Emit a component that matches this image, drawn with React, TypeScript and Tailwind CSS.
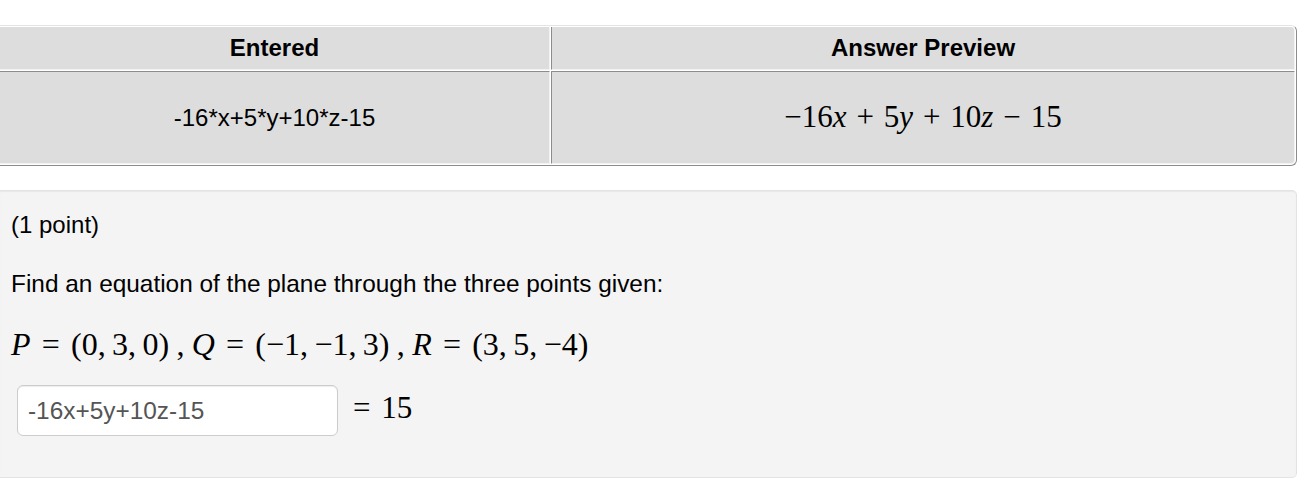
import React from 'react'

const sans = { fontFamily: '"Liberation Sans", Arial, sans-serif' }
const serif = { fontFamily: '"Liberation Serif", "Times New Roman", serif' }

function V({ children }: { children: React.ReactNode }) {
  return <span className="italic">{children}</span>
}

function Op({ children }: { children: React.ReactNode }) {
  return <span className="mx-[0.32em]">{children}</span>
}

function Point({ name, coords }: { name: string; coords: string[] }) {
  return (
    <span>
      <V>{name}</V>
      <span className="mx-[0.35em]">=</span>
      <span>(</span>
      {coords.map((c, i) => (
        <span key={i}>
          {c}
          {i < coords.length - 1 && <span className="mr-[0.2em]">,</span>}
        </span>
      ))}
      <span>)</span>
    </span>
  )
}

export default function App() {
  return (
    <div className="w-[1301px] h-[485px] bg-white text-black overflow-hidden" style={sans}>
      {/* attempt results table */}
      <div className="mt-[25px] w-[1297px] rounded-tr-[6px] rounded-br-[6px] border-t border-r border-b border-t-[#e4e4e4] border-r-[#8c8c8c] border-b-[#8c8c8c] py-px pr-px">
        <div className="grid grid-cols-[550px_1fr] gap-px">
          <div className="h-[43px] flex items-center justify-center bg-[#dddddd] border-b border-r border-b-[#f2f2f2] border-r-[#f2f2f2] text-[24px] font-bold">
            Entered
          </div>
          <div className="h-[43px] flex items-center justify-center bg-[#dddddd] border-b border-r border-l border-b-[#f2f2f2] border-r-[#f2f2f2] border-l-[#8c8c8c] rounded-tr-[4px] text-[24px] font-bold">
            Answer Preview
          </div>
          <div className="h-[93px] flex items-center justify-center bg-[#dddddd] border-t border-b border-r border-t-[#8c8c8c] border-b-[#f2f2f2] border-r-[#f2f2f2] text-[24px]">
            -16*x+5*y+10*z-15
          </div>
          <div
            className="h-[93px] flex items-center justify-center bg-[#dddddd] border border-t-[#8c8c8c] border-l-[#8c8c8c] border-b-[#f2f2f2] border-r-[#f2f2f2] rounded-br-[4px] text-[31px]"
            style={serif}
          >
            <span>
              −16<V>x</V>
              <Op>+</Op>5<V>y</V>
              <Op>+</Op>10<V>z</V>
              <Op>−</Op>15
            </span>
          </div>
        </div>
      </div>

      {/* problem body */}
      <div className="mt-[24px] w-[1297px] h-[288px] bg-[#f4f4f4] border-t border-r border-b border-[#e3e3e3] rounded-r-[5px] shadow-[inset_0_1px_1px_rgba(0,0,0,0.05)] pl-[11px] pt-[17px]">
        <p className="text-[24px] leading-[34px]">(1 point)</p>
        <p className="mt-[25px] text-[24.4px] leading-[34px]">
          Find an equation of the plane through the three points given:
        </p>
        <p className="mt-[23px] text-[32px] leading-[40px]" style={serif}>
          <Point name="P" coords={['0', '3', '0']} />
          <span className="mx-[0.23em]">,</span>
          <Point name="Q" coords={['−1', '−1', '3']} />
          <span className="mx-[0.23em]">,</span>
          <Point name="R" coords={['3', '5', '−4']} />
        </p>
        <div className="mt-[21px] flex items-center">
          <input
            readOnly
            value="-16x+5y+10z-15"
            className="ml-[6px] w-[321px] h-[51px] rounded-[6px] border border-[#cccccc] bg-white px-[10px] text-[24.4px] text-[#555555] shadow-[inset_0_1px_1px_rgba(0,0,0,0.075)] outline-none"
            style={sans}
          />
          <span className="ml-[15px] pb-[4px] text-[31px]" style={serif}>
            <span className="mr-[0.35em]">=</span>15
          </span>
        </div>
      </div>
    </div>
  )
}
